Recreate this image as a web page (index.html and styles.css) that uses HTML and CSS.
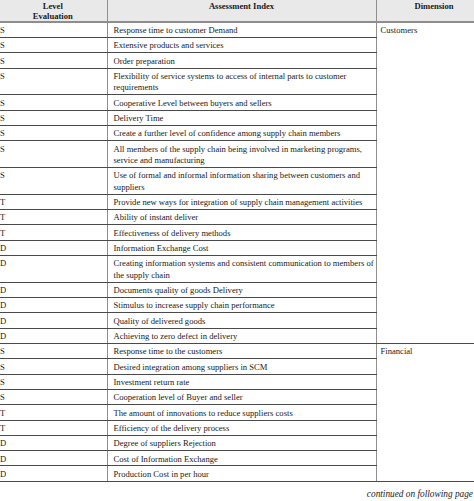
FILE: index.html
```html
<!DOCTYPE html>
<html lang="en">
<head>
<meta charset="utf-8">
<title>Assessment indexes</title>
<link rel="stylesheet" href="styles.css">
</head>
<body>
<div class="sheet">
<table class="grid">
<colgroup><col class="c-level"><col class="c-index"><col class="c-dim"></colgroup>
<thead>
<tr><th class="h-level">Level<br>Evaluation</th><th>Assessment Index</th><th>Dimension</th></tr>
</thead>
<tbody>
<tr><td class="lvl">S</td><td class="idx">Response time to customer Demand</td><td class="dim" rowspan="18">Customers</td></tr>
<tr><td class="lvl">S</td><td class="idx">Extensive products and services</td></tr>
<tr><td class="lvl">S</td><td class="idx">Order preparation</td></tr>
<tr><td class="lvl">S</td><td class="idx">Flexibility of service systems to access of internal parts to customer<br>requirements</td></tr>
<tr><td class="lvl">S</td><td class="idx">Cooperative Level between buyers and sellers</td></tr>
<tr><td class="lvl">S</td><td class="idx">Delivery Time</td></tr>
<tr><td class="lvl">S</td><td class="idx">Create a further level of confidence among supply chain members</td></tr>
<tr><td class="lvl">S</td><td class="idx">All members of the supply chain being involved in marketing programs,<br>service and manufacturing</td></tr>
<tr><td class="lvl">S</td><td class="idx">Use of formal and informal information sharing between customers and<br>suppliers</td></tr>
<tr><td class="lvl">T</td><td class="idx">Provide new ways for integration of supply chain management activities</td></tr>
<tr><td class="lvl">T</td><td class="idx">Ability of instant deliver</td></tr>
<tr><td class="lvl">T</td><td class="idx">Effectiveness of delivery methods</td></tr>
<tr><td class="lvl">D</td><td class="idx">Information Exchange Cost</td></tr>
<tr><td class="lvl">D</td><td class="idx">Creating information systems and consistent communication to members of<br>the supply chain</td></tr>
<tr><td class="lvl">D</td><td class="idx">Documents quality of goods Delivery</td></tr>
<tr><td class="lvl">D</td><td class="idx">Stimulus to increase supply chain performance</td></tr>
<tr><td class="lvl">D</td><td class="idx">Quality of delivered goods</td></tr>
<tr><td class="lvl">D</td><td class="idx">Achieving to zero defect in delivery</td></tr>
<tr><td class="lvl">S</td><td class="idx">Response time to the customers</td><td class="dim" rowspan="9">Financial</td></tr>
<tr><td class="lvl">S</td><td class="idx">Desired integration among suppliers in SCM</td></tr>
<tr><td class="lvl">S</td><td class="idx">Investment return rate</td></tr>
<tr><td class="lvl">S</td><td class="idx">Cooperation level of Buyer and seller</td></tr>
<tr><td class="lvl">T</td><td class="idx">The amount of innovations to reduce suppliers costs</td></tr>
<tr><td class="lvl">T</td><td class="idx">Efficiency of the delivery process</td></tr>
<tr><td class="lvl">D</td><td class="idx">Degree of suppliers Rejection</td></tr>
<tr><td class="lvl">D</td><td class="idx">Cost of Information Exchange</td></tr>
<tr><td class="lvl">D</td><td class="idx">Production Cost in per hour</td></tr>
</tbody>
</table>
<p class="cont">continued on following page</p>
</div>
</body>
</html>
```
FILE: styles.css
```css
html, body {
  margin: 0;
  padding: 0;
  background: #ffffff;
  overflow: hidden;
}

.sheet {
  width: 474px;
  overflow: hidden;
  font-family: "Liberation Serif", "Times New Roman", serif;
  color: #1a1a1a;
}

.grid {
  border-collapse: collapse;
  table-layout: fixed;
  width: 493px;
  margin-left: -1px;
  font-size: 8.6px;
}

.c-level { width: 108px; }
.c-index { width: 269px; }
.c-dim { width: 116px; }

.grid th {
  background: #e9e9e9;
  font-weight: bold;
  font-size: 8.6px;
  line-height: 10px;
  text-align: center;
  vertical-align: top;
  padding: 0.6px 0 0.1px;
  height: 20px;
  border-bottom: 2px solid #8d8d8d;
  border-right: 1px solid #8f8f8f;
}

.grid th.h-level {
  padding-left: 0;
}

.grid td {
  line-height: 11.4px;
  padding: 2.4px 0 0.53px;
  vertical-align: top;
  border-bottom: 1px solid #4a4a4a;
  border-right: 1px solid #8f8f8f;
  white-space: nowrap;
}

.grid td.lvl {
  padding-left: 1px;
}

.grid td.idx {
  padding-left: 6px;
}

.grid td.dim {
  padding-left: 4px;
}

.cont {
  margin: 6px 0 0;
  padding-right: 1px;
  text-align: right;
  font-style: italic;
  font-size: 9.3px;
  line-height: 12px;
}
```
